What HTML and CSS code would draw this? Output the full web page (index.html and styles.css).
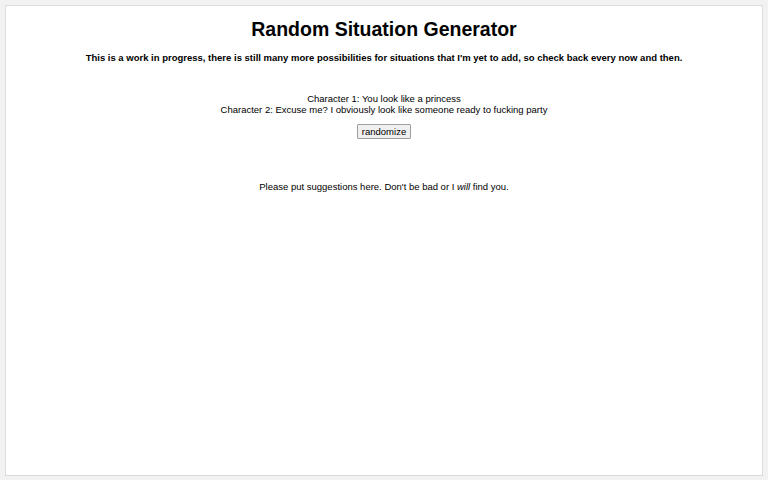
FILE: index.html
```html
<!DOCTYPE html>
<html lang="en">

<head>
    <meta charset="UTF-8" />
    <title>Random Situation Generator</title>
    <link rel="stylesheet" href="styles.css">
</head>

<body>
    <div class="page">
        <h1>Random Situation Generator</h1>
        <p class="note">This is a work in progress, there is still many more possibilities for situations that I'm yet to add, so check back every now and then.</p>

        <div class="situation" id="situation">
            <div>Character 1: You look like a princess</div>
            <div>Character 2: Excuse me? I obviously look like someone ready to fucking party</div>
        </div>

        <button class="randomize" onclick="randomize()">randomize</button>

        <p class="suggest">Please put suggestions here. Don't be bad or I <i>will</i> find you.</p>
    </div>

    <script>
        const situations = [
            ["You look like a princess", "Excuse me? I obviously look like someone ready to fucking party"],
            ["Did you eat my sandwich?", "Define 'eat'."],
            ["We need to talk.", "I'm already running."]
        ];

        function randomize() {
            const s = situations[Math.floor(Math.random() * situations.length)];
            document.getElementById('situation').innerHTML =
                '<div>Character 1: ' + s[0] + '</div><div>Character 2: ' + s[1] + '</div>';
        }
    </script>
</body>

</html>
```

FILE: styles.css
```css
body {
    margin: 0;
    padding: 5px;
    background: #f2f2f2;
    font-family: "Liberation Sans", Arial, sans-serif;
    font-size: 9.5px;
    color: #000;
}

.page {
    background: #fff;
    border: 1px solid #dcdcdc;
    text-align: center;
    padding-top: 15px;
    box-sizing: border-box;
    height: 471px;
}

h1 {
    font-size: 19.5px;
    margin: 0;
    line-height: 16px;
}

.note {
    font-weight: bold;
    margin: 15px 0 0;
}

.situation {
    margin-top: 30px;
    line-height: 11px;
}

.randomize {
    margin-top: 9px;
    font-family: "Liberation Sans", Arial, sans-serif;
    font-size: 9.5px;
    padding: 1px 4px;
    background: #f0f0f0;
    border: 1px solid #a0a0a0;
    border-radius: 1px;
}

.suggest {
    margin: 42px 0 0;
}
```
